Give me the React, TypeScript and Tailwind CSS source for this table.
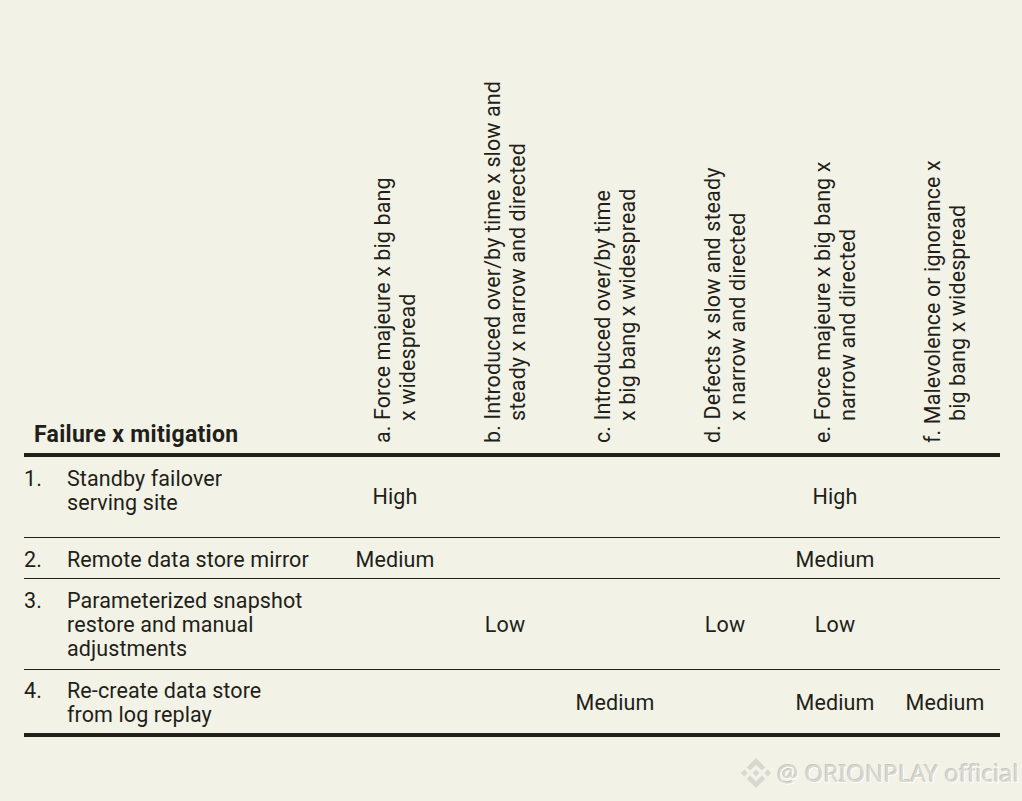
import React from "react";

const headers: [string, string][] = [
  ["a. Force majeure x big bang", "x widespread"],
  ["b. Introduced over/by time x slow and", "steady x narrow and directed"],
  ["c. Introduced over/by time", "x big bang x widespread"],
  ["d. Defects x slow and steady", "x narrow and directed"],
  ["e. Force majeure x big bang x", "narrow and directed"],
  ["f. Malevolence or ignorance x", "big bang x widespread"],
];

type Row = {
  n: string;
  label: string[];
  vals: string[];
  rowCls: string;
  labelCls: string;
};

const rows: Row[] = [
  {
    n: "1.",
    label: ["Standby failover", "serving site"],
    vals: ["High", "", "", "", "High", ""],
    rowCls: "h-[81px] border-b border-[#221e19]",
    labelCls: "self-start pt-[10px]",
  },
  {
    n: "2.",
    label: ["Remote data store mirror"],
    vals: ["Medium", "", "", "", "Medium", ""],
    rowCls: "h-[41px] pt-[3px] border-b border-[#221e19]",
    labelCls: "",
  },
  {
    n: "3.",
    label: ["Parameterized snapshot", "restore and manual", "adjustments"],
    vals: ["", "Low", "", "Low", "Low", ""],
    rowCls: "h-[91px] pt-[1px] border-b border-[#221e19]",
    labelCls: "",
  },
  {
    n: "4.",
    label: ["Re-create data store", "from log replay"],
    vals: ["", "", "Medium", "", "Medium", "Medium"],
    rowCls: "h-[67px] pt-[2px] border-b-4 border-[#221e19]",
    labelCls: "",
  },
];

function BinanceLogo() {
  return (
    <svg viewBox="0 0 126.61 126.61" className="w-[30px] h-[30px]" fill="#d8d8d0">
      <path d="M38.73 53.2l24.59-24.58 24.6 24.6 14.3-14.31L63.32 0 24.42 38.9l14.31 14.3zM0 63.31l14.3-14.31 14.31 14.31-14.31 14.3L0 63.31zm38.73 10.1l24.59 24.59 24.6-24.6 14.31 14.29-38.9 38.91-38.91-38.88-.02-.02 14.33-14.29zm59.58-10.1l14.3-14.31 14.31 14.31-14.31 14.3-14.3-14.3z" />
      <path d="M77.83 63.3L63.32 48.78 52.59 59.51l-1.24 1.23-2.54 2.54-.02.02.02.02 14.51 14.5 14.51-14.52.01-.01-.01-.01z" />
    </svg>
  );
}

export default function App() {
  return (
    <div className="relative w-[1022px] h-[801px] overflow-hidden bg-[#f3f2e6] text-[#221e19] font-['Roboto',sans-serif]">
      <div className="ml-[24px] w-[976px]">
        <div className="grid grid-cols-[316px_repeat(6,110px)] h-[457px] items-end border-b-4 border-[#221e19]">
          <div className="pl-[10px] pb-[6px] text-[23px] leading-[24px] font-bold tracking-[0.3px] whitespace-nowrap">
            Failure x mitigation
          </div>
          {headers.map((h, i) => (
            <div key={i} className="flex justify-center pb-[10px]">
              <div className="h-[410px] [writing-mode:vertical-rl] rotate-180 whitespace-nowrap text-[21.5px] tracking-[0.1px] leading-[24.5px] ps-[22px] -indent-[22px]">
                {h[0]}
                <br />
                {h[1]}
              </div>
            </div>
          ))}
        </div>
        {rows.map((r, i) => (
          <div
            key={i}
            className={`grid grid-cols-[316px_repeat(6,110px)] items-center text-[21.5px] tracking-[0.1px] leading-[24px] ${r.rowCls}`}
          >
            <div className={`flex items-start ${r.labelCls}`}>
              <div className="w-[43px] shrink-0">{r.n}</div>
              <div>
                {r.label.map((l, j) => (
                  <div key={j} className="whitespace-nowrap">
                    {l}
                  </div>
                ))}
              </div>
            </div>
            {r.vals.map((v, j) => (
              <div key={j} className="text-center">
                {v}
              </div>
            ))}
          </div>
        ))}
      </div>
      <div className="absolute left-[741px] top-[757px] flex items-center gap-[6px] text-[24px] leading-[32px] text-[#d8d8d0] font-['Noto_Sans',sans-serif] [text-shadow:1px_1px_0_#ffffff,-1px_-1px_0_#c8c8bf]">
        <BinanceLogo />
        <span className="whitespace-nowrap">@ ORIONPLAY official</span>
      </div>
    </div>
  );
}
